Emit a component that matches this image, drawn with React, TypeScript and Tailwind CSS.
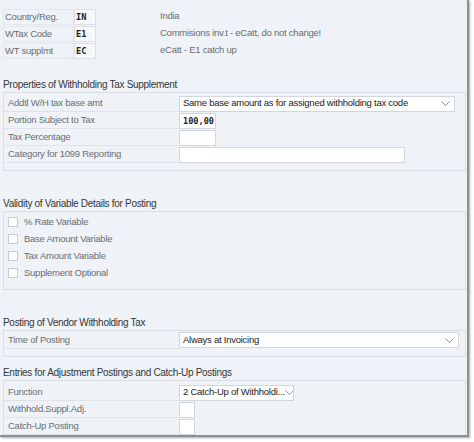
import React from "react";

const Chevron = () => (
  <svg width="9" height="5" viewBox="0 0 9 5" className="shrink-0">
    <polyline points="0.5,0.5 4.5,4.5 8.5,0.5" fill="none" stroke="#8d9196" strokeWidth="1" />
  </svg>
);

const TopRow = ({ label, value, desc }: { label: string; value: string; desc: string }) => (
  <div className="flex h-[17px] items-center">
    <div className="w-[71px] h-[16px] border border-[#e4e8ec] pl-[1px] text-[9.5px] tracking-[-0.25px] leading-[14px] text-[#6a6d70] whitespace-nowrap">
      {label}
    </div>
    <div className="w-[22px] h-[16px] border border-[#dde1e6] bg-[#f6f8fa] pl-[1px] text-[8.6px] leading-[14px] font-bold text-[#222] font-['DejaVu_Sans_Mono',monospace]">
      {value}
    </div>
    <div className="ml-[64px] text-[9.5px] tracking-[-0.25px] text-[#6a6d70] whitespace-nowrap">{desc}</div>
  </div>
);

const Title = ({ children }: { children: React.ReactNode }) => (
  <div className="h-[15px] pl-[3px] text-[10px] tracking-[-0.3px] leading-[15px] text-[#32363a] whitespace-nowrap">{children}</div>
);

const Label = ({ children }: { children: React.ReactNode }) => (
  <div className="w-[175px] h-full flex items-center pl-[4px] border-b border-[#dfe3e8] text-[9.5px] tracking-[-0.25px] text-[#6a6d70] whitespace-nowrap">
    {children}
  </div>
);

const Select = ({ text, width }: { text: string; width: string }) => (
  <div
    className={`${width} h-[16px] bg-white border border-[#d3d7dc] flex items-center justify-between pl-[3px] pr-[4px] text-[9.5px] tracking-[-0.25px] text-[#222] whitespace-nowrap overflow-hidden`}
  >
    <span>{text}</span>
    <Chevron />
  </div>
);

const Check = ({ label }: { label: string }) => (
  <div className="flex h-[17px] items-center pl-[4px]">
    <div className="w-[10px] h-[10px] bg-white border border-[#c9cdd2]" />
    <span className="ml-[6px] text-[9.5px] tracking-[-0.25px] text-[#6a6d70] whitespace-nowrap">{label}</span>
  </div>
);

export default function App() {
  return (
    <div className="w-[474px] h-[442px] bg-white overflow-hidden font-['Liberation_Sans',Arial,sans-serif]">
      <div className="w-[469px] h-[437px] bg-[#eff3f7] border-r-2 border-b-2 border-[#8e9094] shadow-[1px_1px_2px_rgba(0,0,0,0.35)] flex flex-col">
        <div className="pt-[8px] pl-[3px]">
          <TopRow label="Country/Reg." value="IN" desc="India" />
          <TopRow label="WTax Code" value="E1" desc="Commisions inv.t - eCatt, do not change!" />
          <TopRow label="WT supplmt" value="EC" desc="eCatt - E1 catch up" />
        </div>

        <div className="mt-[18px]">
          <Title>Properties of Withholding Tax Supplement</Title>
        </div>
        <div className="ml-[3px] w-[463px] h-[79px] border border-[#d9dee4] pt-[2px]">
          <div className="flex h-[17px] items-center">
            <Label>Addtl W/H tax base amt</Label>
            <Select text="Same base amount as for assigned withholding tax code" width="w-[276px]" />
          </div>
          <div className="flex h-[17px] items-center">
            <Label>Portion Subject to Tax</Label>
            <div className="w-[37px] h-[16px] bg-white border border-[#d3d7dc] pl-[3px] text-[8.6px] leading-[14px] font-bold text-[#222] font-['DejaVu_Sans_Mono',monospace]">
              100,00
            </div>
          </div>
          <div className="flex h-[17px] items-center">
            <Label>Tax Percentage</Label>
            <div className="w-[37px] h-[16px] bg-white border border-[#d3d7dc]" />
          </div>
          <div className="flex h-[17px] items-center">
            <Label>Category for 1099 Reporting</Label>
            <div className="w-[226px] h-[16px] bg-white border border-[#d3d7dc]" />
          </div>
        </div>

        <div className="mt-[25px]">
          <Title>Validity of Variable Details for Posting</Title>
        </div>
        <div className="ml-[3px] w-[463px] h-[80px] border border-[#d9dee4] pt-[2px]">
          <Check label="% Rate Variable" />
          <Check label="Base Amount Variable" />
          <Check label="Tax Amount Variable" />
          <Check label="Supplement Optional" />
        </div>

        <div className="mt-[25px]">
          <Title>Posting of Vendor Withholding Tax</Title>
        </div>
        <div className="ml-[3px] w-[463px] h-[27px] border border-[#d9dee4]">
          <div className="flex h-[18px] items-center">
            <Label>Time of Posting</Label>
            <Select text="Always at Invoicing" width="w-[280px]" />
          </div>
        </div>

        <div className="mt-[8px]">
          <Title>Entries for Adjustment Postings and Catch-Up Postings</Title>
        </div>
        <div className="ml-[3px] w-[463px] flex-1 border-l border-r border-t border-[#d9dee4] pt-[3px]">
          <div className="flex h-[17px] items-center">
            <Label>Function</Label>
            <Select text="2 Catch-Up of Withholdi..." width="w-[115px]" />
          </div>
          <div className="flex h-[17px] items-center">
            <Label>Withhold.Suppl.Adj.</Label>
            <div className="w-[16px] h-[16px] bg-white border border-[#d3d7dc]" />
          </div>
          <div className="flex h-[17px] items-center">
            <Label>Catch-Up Posting</Label>
            <div className="w-[16px] h-[16px] bg-white border border-[#d3d7dc]" />
          </div>
        </div>
      </div>
    </div>
  );
}
